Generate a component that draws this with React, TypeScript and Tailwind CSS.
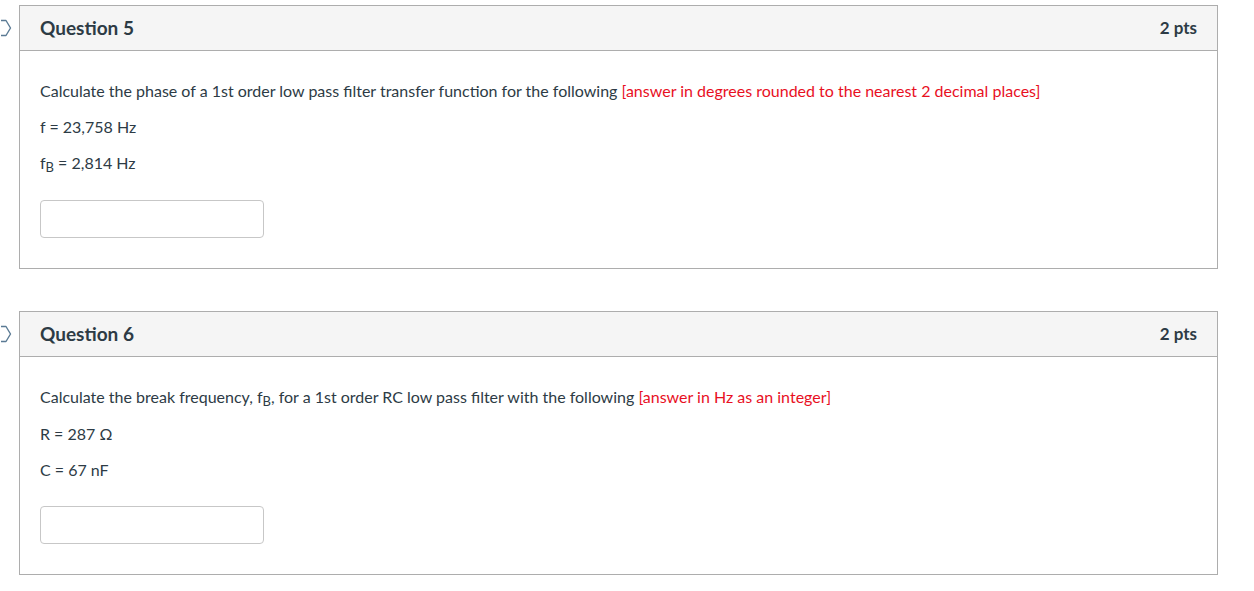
import React from "react";

const Flag = () => (
  <svg
    className="absolute left-[-19px] top-[13px]"
    width="12"
    height="18"
    viewBox="0 0 12 18"
    fill="none"
  >
    <path d="M-4 1.5 H5 L9.5 9 L5 16.5 H-4" stroke="#5a7a94" strokeWidth="1.4" strokeLinejoin="round" />
  </svg>
);

type Q = {
  num: number;
  pts: string;
  prompt: React.ReactNode;
  hint: string;
  lines: React.ReactNode[];
};

const Sub = ({ children }: { children: React.ReactNode }) => (
  <span className="relative top-[3px] text-[13px]">{children}</span>
);

const QuestionCard = ({ q }: { q: Q }) => (
  <div className="relative w-[1199px] border border-[#adadad] bg-white">
    <Flag />
    <div className="flex h-[45px] items-center justify-between border-b border-[#adadad] bg-[#f5f5f5] px-5">
      <h2 className="text-[19px] font-bold text-[#2d3b45]">Question {q.num}</h2>
      <span className="text-[17px] font-bold text-[#2d3b45]">{q.pts}</span>
    </div>
    <div className="px-5 pt-[30px] pb-[30px] text-[16px] text-[#2d3b45]">
      <p className="leading-5">
        {q.prompt} <span className="text-[#e8101f]">{q.hint}</span>
      </p>
      {q.lines.map((l, i) => (
        <p key={i} className="mt-4 leading-5">
          {l}
        </p>
      ))}
      <input
        type="text"
        className="mt-[26px] block h-[38px] w-[224px] rounded border border-[#c7c7c7] bg-white"
      />
    </div>
  </div>
);

const questions: Q[] = [
  {
    num: 5,
    pts: "2 pts",
    prompt: "Calculate the phase of a 1st order low pass filter transfer function for the following",
    hint: "[answer in degrees rounded to the nearest 2 decimal places]",
    lines: [
      "f = 23,758 Hz",
      <>
        f<Sub>B</Sub> = 2,814 Hz
      </>,
    ],
  },
  {
    num: 6,
    pts: "2 pts",
    prompt: (
      <>
        Calculate the break frequency, f<Sub>B</Sub>, for a 1st order RC low pass filter with the following
      </>
    ),
    hint: "[answer in Hz as an integer]",
    lines: ["R = 287 Ω", "C = 67 nF"],
  },
];

export default function App() {
  return (
    <div
      className="min-h-[591px] bg-white pt-[5px] pl-[19px]"
      style={{ fontFamily: "Lato, 'Open Sans', sans-serif" }}
    >
      <div className="flex flex-col gap-[42px]">
        {questions.map((q) => (
          <QuestionCard key={q.num} q={q} />
        ))}
      </div>
    </div>
  );
}
